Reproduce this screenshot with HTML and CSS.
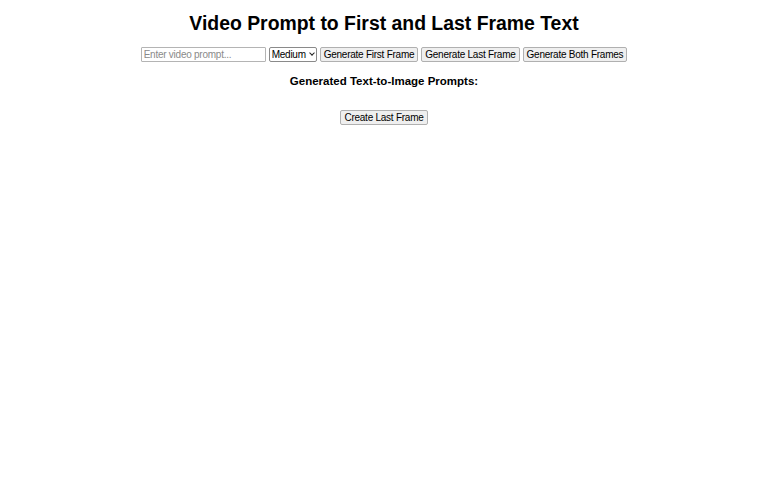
FILE: index.html
```html
<!DOCTYPE html>
<html>
<head>
<meta charset="utf-8">
<title>Video Prompt to First and Last Frame Text</title>
<link rel="stylesheet" href="styles.css">
</head>
<body>
<main class="app">
  <h1 class="title">Video Prompt to First and Last Frame Text</h1>
  <div class="controls">
    <input class="prompt" type="text" placeholder="Enter video prompt...">
    <span class="select-wrap">
      <select class="length">
        <option>Short</option>
        <option selected>Medium</option>
        <option>Long</option>
      </select>
    </span>
    <button class="btn">Generate First Frame</button>
    <button class="btn">Generate Last Frame</button>
    <button class="btn">Generate Both Frames</button>
  </div>
  <h3 class="subtitle">Generated Text-to-Image Prompts:</h3>
  <div class="output"></div>
  <button class="btn">Create Last Frame</button>
</main>
</body>
</html>
```

FILE: styles.css
```css
html, body {
  margin: 0;
  background: #fff;
}

.app {
  font-family: "Liberation Sans", Arial, sans-serif;
  text-align: center;
  padding-top: 12px;
}

.title {
  font-size: 19.4px;
  font-weight: bold;
  margin: 0 0 13px;
  line-height: 22px;
}

.controls {
  display: flex;
  justify-content: center;
  align-items: center;
  gap: 3px;
}

.prompt,
.length,
.btn {
  font-family: "Liberation Sans", Arial, sans-serif;
  font-size: 10px;
  letter-spacing: -0.25px;
  height: 15px;
  box-sizing: border-box;
  margin: 0;
}

.prompt {
  width: 125px;
  padding: 0 2px;
  border: 1px solid #b4b4b4;
  border-radius: 1px;
}

.prompt::placeholder {
  color: #8a8a8a;
}

/* native arrow is too large at this size, draw a small chevron instead */
.select-wrap {
  position: relative;
  display: flex;
}

.select-wrap::after {
  content: "";
  position: absolute;
  right: 3px;
  top: 4px;
  width: 3px;
  height: 3px;
  border-right: 1.2px solid #222;
  border-bottom: 1.2px solid #222;
  transform: rotate(45deg);
  pointer-events: none;
}

.length {
  appearance: none;
  -webkit-appearance: none;
  width: 48px;
  padding: 0 8px 0 2px;
  border: 1px solid #8a8a8a;
  border-radius: 2px;
  background: #fff;
  color: #000;
}

.btn {
  padding: 0 3px;
  border: 1px solid #b0b0b0;
  border-radius: 2px;
  background: #efefef;
  color: #000;
}

.subtitle {
  font-size: 11.5px;
  font-weight: bold;
  margin: 12px 0 0;
  line-height: 14px;
}

.output {
  height: 19px;
}
```
